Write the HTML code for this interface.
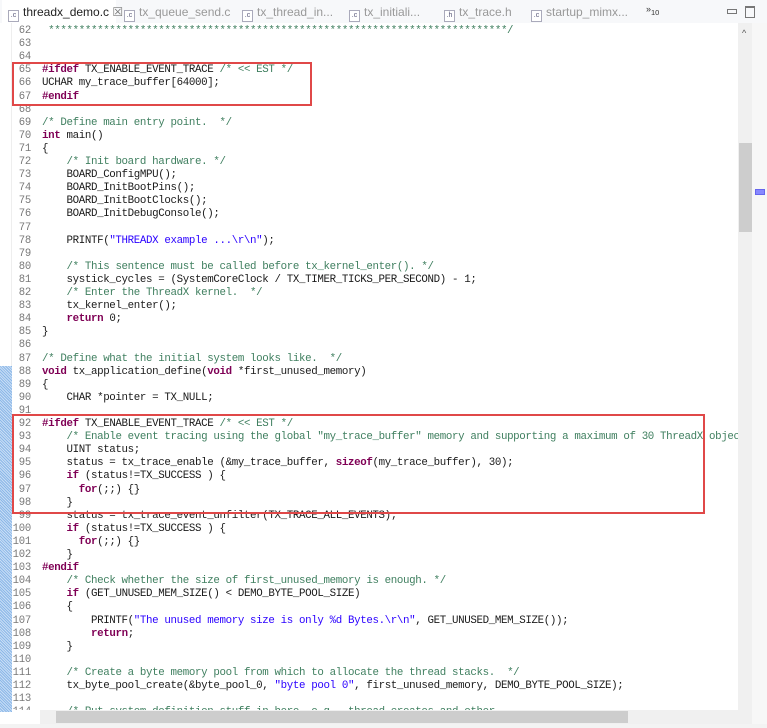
<!DOCTYPE html>
<html><head><meta charset="utf-8"><style>
body{margin:0;width:767px;height:728px;overflow:hidden;background:#fff;position:relative;font-family:"Liberation Mono",monospace;}
.tabs{position:absolute;left:0;top:0;width:767px;height:23px;background:#f7f8fa;font-family:"Liberation Sans",sans-serif;font-size:12px;color:#999;}
.tab{position:absolute;top:5px;white-space:nowrap}
.tab i{display:inline-block;width:9px;height:10px;border:1px solid #aab;font-style:normal;font-size:7px;line-height:10px;text-align:center;color:#557;margin-right:4px;vertical-align:-1px;background:#fff}
.act{position:absolute;left:2px;top:0;width:114px;height:23px;background:#fff;}
.gut{position:absolute;left:0;top:23px;width:40px;height:705px;background:#fff}
.hatch{position:absolute;left:0;top:366px;width:12px;height:346px;background:repeating-linear-gradient(45deg,#8cb8e8 0 1px,#c8ddf5 1px 2px);}
.ln{position:absolute;left:0;width:31px;text-align:right;font-size:10.6px;color:#787878;line-height:13.1px;letter-spacing:-0.25px}
.code{position:absolute;left:42px;width:696px;overflow:hidden;white-space:pre;font-size:10.8px;letter-spacing:-0.36px;line-height:13.1px;color:#1a1a1a;}
.k{color:#7f0055;font-weight:bold}.c{color:#3f7f5f}.s{color:#2a00ff}
.box{position:absolute;border:2px solid #e04848;}
</style></head><body>
<div class="tabs">
<div class="act"></div>
<div class="tab" style="left:8px;color:#222"><i>.c</i>threadx_demo.c <span style="color:#777">☒</span></div>
<div class="tab" style="left:124px"><i>.c</i>tx_queue_send.c</div>
<div class="tab" style="left:242px"><i>.c</i>tx_thread_in...</div>
<div class="tab" style="left:349px"><i>.c</i>tx_initiali...</div>
<div class="tab" style="left:444px"><i>.h</i>tx_trace.h</div>
<div class="tab" style="left:531px"><i>.c</i>startup_mimx...</div>
<div class="tab" style="left:646px;color:#333;font-size:9px;top:4px">»<sub>10</sub></div>
<div style="position:absolute;left:727px;top:9px;width:8px;height:3px;border:1px solid #777"></div>
<div style="position:absolute;left:745px;top:6px;width:8px;height:9px;border:1px solid #777;border-top-width:2px"></div>
</div>
<div class="gut"></div>
<div class="hatch"></div>
<div style="position:absolute;left:11px;top:23px;width:1px;height:343px;background:#eee"></div>
<div style="position:absolute;left:738px;top:23px;width:14px;height:687px;background:#f0f0f0"></div>
<div style="position:absolute;left:739px;top:143px;width:13px;height:89px;background:#cdcdcd"></div>
<div style="position:absolute;left:742px;top:28px;font-size:9px;color:#555;font-family:'Liberation Sans'">^</div>
<div style="position:absolute;left:752px;top:23px;width:15px;height:705px;background:#f7f7f7"></div>
<div style="position:absolute;left:755px;top:189px;width:8px;height:4px;background:#8888ff;border:1px solid #6666ee"></div>
<div style="position:absolute;left:40px;top:710px;width:712px;height:14px;background:#f0f0f0"></div>
<div style="position:absolute;left:56px;top:711px;width:572px;height:12px;background:#cdcdcd"></div>
<div style="position:absolute;left:0;top:724px;width:767px;height:4px;background:#f3f3f3"></div>
<div id="c"></div>
<script>
var L=[
[62,'<span class="c"> ***************************************************************************/</span>'],
[63,''],[64,''],
[65,'<span class="k">#ifdef</span> TX_ENABLE_EVENT_TRACE <span class="c">/* &lt;&lt; EST */</span>'],
[66,'UCHAR my_trace_buffer[64000];'],
[67,'<span class="k">#endif</span>'],
[68,''],
[69,'<span class="c">/* Define main entry point.  */</span>'],
[70,'<span class="k">int</span> main()'],
[71,'{'],
[72,'    <span class="c">/* Init board hardware. */</span>'],
[73,'    BOARD_ConfigMPU();'],
[74,'    BOARD_InitBootPins();'],
[75,'    BOARD_InitBootClocks();'],
[76,'    BOARD_InitDebugConsole();'],
[77,''],
[78,'    PRINTF(<span class="s">"THREADX example ...\\r\\n"</span>);'],
[79,''],
[80,'    <span class="c">/* This sentence must be called before tx_kernel_enter(). */</span>'],
[81,'    systick_cycles = (SystemCoreClock / TX_TIMER_TICKS_PER_SECOND) - 1;'],
[82,'    <span class="c">/* Enter the ThreadX kernel.  */</span>'],
[83,'    tx_kernel_enter();'],
[84,'    <span class="k">return</span> 0;'],
[85,'}'],
[86,''],
[87,'<span class="c">/* Define what the initial system looks like.  */</span>'],
[88,'<span class="k">void</span> tx_application_define(<span class="k">void</span> *first_unused_memory)'],
[89,'{'],
[90,'    CHAR *pointer = TX_NULL;'],
[91,''],
[92,'<span class="k">#ifdef</span> TX_ENABLE_EVENT_TRACE <span class="c">/* &lt;&lt; EST */</span>'],
[93,'    <span class="c">/* Enable event tracing using the global "my_trace_buffer" memory and supporting a maximum of 30 ThreadX objects */</span>'],
[94,'    UINT status;'],
[95,'    status = tx_trace_enable (&amp;my_trace_buffer, <span class="k">sizeof</span>(my_trace_buffer), 30);'],
[96,'    <span class="k">if</span> (status!=TX_SUCCESS ) {'],
[97,'      <span class="k">for</span>(;;) {}'],
[98,'    }'],
[99,'    status = tx_trace_event_unfilter(TX_TRACE_ALL_EVENTS);'],
[100,'    <span class="k">if</span> (status!=TX_SUCCESS ) {'],
[101,'      <span class="k">for</span>(;;) {}'],
[102,'    }'],
[103,'<span class="k">#endif</span>'],
[104,'    <span class="c">/* Check whether the size of first_unused_memory is enough. */</span>'],
[105,'    <span class="k">if</span> (GET_UNUSED_MEM_SIZE() &lt; DEMO_BYTE_POOL_SIZE)'],
[106,'    {'],
[107,'        PRINTF(<span class="s">"The unused memory size is only %d Bytes.\\r\\n"</span>, GET_UNUSED_MEM_SIZE());'],
[108,'        <span class="k">return</span>;'],
[109,'    }'],
[110,''],
[111,'    <span class="c">/* Create a byte memory pool from which to allocate the thread stacks.  */</span>'],
[112,'    tx_byte_pool_create(&amp;byte_pool_0, <span class="s">"byte pool 0"</span>, first_unused_memory, DEMO_BYTE_POOL_SIZE);'],
[113,''],
[114,'    <span class="c">/* Put system definition stuff in here, e.g., thread creates and other</span>']
];
var h='';
L.forEach(function(l,i){var t=25+i*13.1;var hh=(t+13.1>710)?(710-t):13.1;
h+='<div class="ln" style="top:'+t+'px;height:'+hh+'px;overflow:hidden">'+l[0]+'</div>';
h+='<div class="code" style="top:'+t+'px;height:'+hh+'px">'+l[1]+'</div>';});
document.getElementById('c').innerHTML=h;
</script>
<div class="box" style="left:12px;top:62px;width:296px;height:40px"></div>
<div class="box" style="left:12px;top:414px;width:689px;height:96px"></div>
</body></html>
